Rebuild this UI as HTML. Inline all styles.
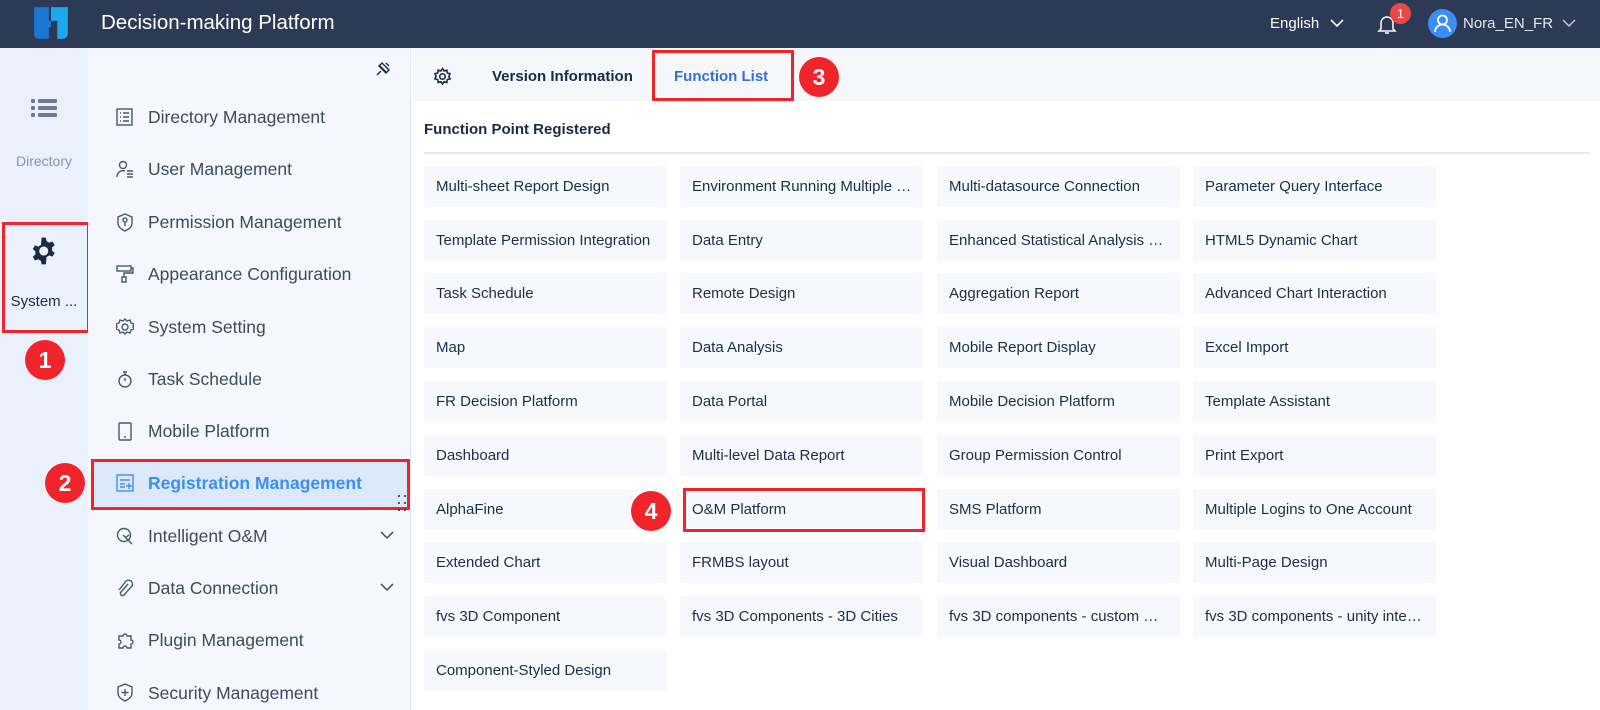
<!DOCTYPE html>
<html><head><meta charset="utf-8"><style>
*{margin:0;padding:0;box-sizing:border-box}
body{width:1600px;height:710px;overflow:hidden;background:#fff;font-family:"Liberation Sans",Arial,sans-serif;position:relative;color:#1f2d4a}
.abs{position:absolute}
#hdr{left:0;top:0;width:1600px;height:48px;background:#2c3a55}
#rail{left:0;top:48px;width:88px;height:662px;background:#eaf1fc}
#side{left:88px;top:48px;width:323px;height:662px;background:#f5f7fd;border-right:1px solid #e3e6ee}
.mi{position:absolute;left:148px;font-size:17.5px;color:#3e4a60;line-height:20px}
#tabs{left:412px;top:48px;width:1188px;height:53px;background:#f6f7fb}
.cell{position:absolute;width:243px;height:41px;background:#f6f8fc;font-size:15px;line-height:41px;padding-left:12px;color:#1f2d4a;white-space:nowrap;overflow:hidden}
.badge{position:absolute;width:40px;height:40px;border-radius:50%;background:#f0242b;color:#fff;font-weight:bold;font-size:23px;text-align:center;line-height:40px}
.red{position:absolute;border:3px solid #f0242b}
</style></head><body>
<div id="hdr" class="abs">
 <svg class="abs" style="left:32px;top:4px" width="38" height="38" viewBox="0 0 36 36"><path d="M2 3h14v30H6a4 4 0 0 1-4-4z" fill="#1a77d2"/><path d="M18 3h16v25a5 5 0 0 1-5 5h-5V16h-6z" fill="#1ea6ee"/><rect x="10" y="16" width="8" height="6" fill="#1a77d2"/></svg>
 <div class="abs" style="left:101px;top:11px;color:#fff;font-size:20.5px">Decision-making Platform</div>
 <div class="abs" style="left:1270px;top:15px;color:#fff;font-size:15px">English</div>
 <svg class="abs" style="left:1330px;top:18px" width="14" height="10"><path d="M1 2l6 6 6-6" stroke="#fff" stroke-width="1.6" fill="none"/></svg>
 <svg class="abs" style="left:1377px;top:13px" width="20" height="22"><path d="M4 16V10a6 6 0 0 1 12 0v6l2 2H2z M8 20h4" stroke="#fff" stroke-width="1.5" fill="none"/></svg>
 <div class="abs" style="left:1390px;top:3px;width:21px;height:21px;border-radius:50%;background:#e94848;color:#fff;font-size:13px;text-align:center;line-height:21px">1</div>
 <div class="abs" style="left:1428px;top:9px;width:29px;height:29px;border-radius:50%;background:#3a8ef6"></div>
 <svg class="abs" style="left:1428px;top:9px" width="29" height="29"><circle cx="14.5" cy="11" r="4.5" stroke="#fff" stroke-width="1.8" fill="none"/><path d="M7 23a7.5 7.5 0 0 1 15 0" stroke="#fff" stroke-width="1.8" fill="none"/></svg>
 <div class="abs" style="left:1463px;top:15px;color:#e4e8ef;font-size:15px">Nora_EN_FR</div>
 <svg class="abs" style="left:1562px;top:18px" width="14" height="10"><path d="M1 2l6 6 6-6" stroke="#c8ced9" stroke-width="1.4" fill="none"/></svg>
</div>
<div id="rail" class="abs"></div>
<svg class="abs" style="left:31px;top:98px" width="26" height="20"><g fill="#6b7a92"><rect x="0" y="1" width="4" height="4" rx="1"/><rect x="7" y="1" width="19" height="4" rx="1"/><rect x="0" y="8" width="4" height="4" rx="1"/><rect x="7" y="8" width="19" height="4" rx="1"/><rect x="0" y="15" width="4" height="4" rx="1"/><rect x="7" y="15" width="19" height="4" rx="1"/></g></svg>
<div class="abs" style="left:0;width:88px;top:153px;text-align:center;color:#8a94a6;font-size:14px">Directory</div>
<svg class="abs" style="left:28px;top:235px" width="32" height="32" viewBox="0 0 24 24"><path fill="#1b2a44" fill-rule="evenodd" d="M13.4 2l.5 2.6a7.6 7.6 0 0 1 2 1.2l2.5-.9 1.6 2.8-2 1.7a7.5 7.5 0 0 1 0 2.3l2 1.7-1.6 2.8-2.5-.9a7.6 7.6 0 0 1-2 1.2L13.4 22h-3.2l-.5-2.6a7.6 7.6 0 0 1-2-1.2l-2.5.9-1.6-2.8 2-1.7a7.5 7.5 0 0 1 0-2.3l-2-1.7 1.6-2.8 2.5.9a7.6 7.6 0 0 1 2-1.2L10.2 2zM11.8 8.6a3.4 3.4 0 1 0 0 6.8 3.4 3.4 0 0 0 0-6.8z"/></svg>
<div class="abs" style="left:0;width:88px;top:293px;text-align:center;color:#1b2a44;font-size:15px">System ...</div>
<div class="red" style="left:2px;top:222px;width:88px;height:111px"></div>
<div class="badge" style="left:25px;top:340px">1</div>
<div id="side" class="abs"></div>
<svg class="abs" style="left:374px;top:60px" width="18" height="18"><path d="M3 15l4-4M6 6l6 6M8 3l7 7-3 3-7-7zM12 3l3 3" stroke="#1b2a44" stroke-width="1.4" fill="none"/></svg>
<div class="abs" style="left:91px;top:460px;width:320px;height:49px;background:#dce9fb"></div>
<div class="red" style="left:91px;top:459px;width:319px;height:51px"></div>
<div class="badge" style="left:45px;top:463px">2</div>
<div class="mi" style="top:107px">Directory Management</div>
<div class="mi" style="top:159px">User Management</div>
<div class="mi" style="top:212px">Permission Management</div>
<div class="mi" style="top:264px">Appearance Configuration</div>
<div class="mi" style="top:317px">System Setting</div>
<div class="mi" style="top:369px">Task Schedule</div>
<div class="mi" style="top:421px">Mobile Platform</div>
<div class="mi" style="top:473px;color:#3c8ef0;font-weight:bold">Registration Management</div>
<div class="mi" style="top:526px">Intelligent O&amp;M</div>
<div class="mi" style="top:578px">Data Connection</div>
<div class="mi" style="top:630px">Plugin Management</div>
<div class="mi" style="top:683px">Security Management</div>
<svg class="abs" style="left:380px;top:530px" width="14" height="10"><path d="M1 2l6 6 6-6" stroke="#3e4a60" stroke-width="1.5" fill="none"/></svg>
<svg class="abs" style="left:380px;top:582px" width="14" height="10"><path d="M1 2l6 6 6-6" stroke="#3e4a60" stroke-width="1.5" fill="none"/></svg>
<svg class="abs" style="left:116px;top:108px" width="18" height="500" fill="none" stroke="#4a5670" stroke-width="1.4">
 <rect x="1" y="1" width="15" height="16"/><path d="M4 5h1M7 5h6M4 9h1M7 9h6M4 13h1M7 13h6"/>
 <g transform="translate(0,52)"><circle cx="7" cy="5" r="3.5"/><path d="M1 17a6 6 0 0 1 8-6M11 11h6M11 14h6M11 17h6"/></g>
 <g transform="translate(0,105)"><path d="M9 1l7 3v6c0 4-3 6-7 8-4-2-7-4-7-8V4z"/><circle cx="9" cy="7" r="2"/><path d="M9 9v4"/></g>
 <g transform="translate(0,157)"><rect x="1" y="1" width="14" height="5"/><path d="M15 3h2v5H8v4"/><rect x="6" y="12" width="4" height="5"/></g>
 <g transform="translate(0,210)"><circle cx="9" cy="9" r="3"/><path d="M9 1l2 2 3-1 1 3 3 1-1 3 1 2-3 1-1 3-3-1-2 2-2-2-3 1-1-3-3-1 1-2-1-3 3-1 1-3 3 1z"/></g>
 <g transform="translate(0,262)"><circle cx="9" cy="11" r="6"/><path d="M9 8v3M7 2h4M9 2v3"/></g>
 <g transform="translate(0,314)"><rect x="3" y="1" width="12" height="17" rx="1"/><path d="M8 15h2"/></g>
 <g transform="translate(0,366)" stroke="#3c8ef0"><rect x="1" y="1" width="16" height="16"/><path d="M4 6h10M4 10h5M4 13h5M13 9v6M10 12h6"/></g>
 <g transform="translate(0,419)"><circle cx="8" cy="8" r="6.5"/><path d="M7 8l9 9M10 10l3-2"/></g>
 <g transform="translate(0,471)"><path d="M12 5l-7 8a2 2 0 0 0 3 3l8-9a4 4 0 0 0-6-5L3 11"/></g>
</svg>
<svg class="abs" style="left:116px;top:631px" width="18" height="72" fill="none" stroke="#4a5670" stroke-width="1.4">
 <path d="M3 5h4a2 2 0 0 1 4 0h4v4a2 2 0 0 1 0 4v4H11a2 2 0 0 0-4 0H3v-4a2 2 0 0 0 0-4z"/>
 <g transform="translate(0,52)"><path d="M9 1l7 3v6c0 4-3 6-7 8-4-2-7-4-7-8V4z"/><path d="M9 6v7M5.5 9.5h7"/></g>
</svg>
<svg class="abs" style="left:397px;top:494px" width="10" height="18" fill="#1b2a44"><circle cx="2" cy="2" r="1"/><circle cx="8" cy="2" r="1"/><circle cx="2" cy="9" r="1"/><circle cx="8" cy="9" r="1"/><circle cx="2" cy="16" r="1"/><circle cx="8" cy="16" r="1"/></svg>
<div id="tabs" class="abs"></div>
<svg class="abs" style="left:433px;top:67px" width="19" height="19" viewBox="0 0 24 24" fill="none" stroke="#1b2a44" stroke-width="2"><circle cx="12" cy="12" r="3.5"/><path d="M12 2l2 3 3.5-1 .5 3.5 3.5 1-1.5 3.5 1.5 3-3.5 1-.5 3.5-3.5-1-2 3-2-3-3.5 1-.5-3.5-3.5-1 1.5-3.5-1.5-3 3.5-1 .5-3.5 3.5 1z"/></svg>
<div class="abs" style="left:492px;top:68px;font-size:15px;font-weight:bold;color:#1b2a44">Version Information</div>
<div class="abs" style="left:674px;top:68px;font-size:15px;font-weight:bold;color:#2f6fe0">Function List</div>
<div class="abs" style="left:655px;top:98px;width:133px;height:2px;background:#2f6fe0"></div>
<div class="red" style="left:652px;top:50px;width:142px;height:51px"></div>
<div class="badge" style="left:799px;top:57px">3</div>
<div class="abs" style="left:424px;top:121px;font-size:15px;font-weight:bold;color:#1b2a44">Function Point Registered</div>
<div class="abs" style="left:424px;top:152px;width:1166px;height:2px;background:#e6e8ee"></div>
<div class="cell" style="left:424px;top:166px">Multi-sheet Report Design</div>
<div class="cell" style="left:680px;top:166px">Environment Running Multiple …</div>
<div class="cell" style="left:937px;top:166px">Multi-datasource Connection</div>
<div class="cell" style="left:1193px;top:166px">Parameter Query Interface</div>
<div class="cell" style="left:424px;top:220px">Template Permission Integration</div>
<div class="cell" style="left:680px;top:220px">Data Entry</div>
<div class="cell" style="left:937px;top:220px">Enhanced Statistical Analysis …</div>
<div class="cell" style="left:1193px;top:220px">HTML5 Dynamic Chart</div>
<div class="cell" style="left:424px;top:273px">Task Schedule</div>
<div class="cell" style="left:680px;top:273px">Remote Design</div>
<div class="cell" style="left:937px;top:273px">Aggregation Report</div>
<div class="cell" style="left:1193px;top:273px">Advanced Chart Interaction</div>
<div class="cell" style="left:424px;top:327px">Map</div>
<div class="cell" style="left:680px;top:327px">Data Analysis</div>
<div class="cell" style="left:937px;top:327px">Mobile Report Display</div>
<div class="cell" style="left:1193px;top:327px">Excel Import</div>
<div class="cell" style="left:424px;top:381px">FR Decision Platform</div>
<div class="cell" style="left:680px;top:381px">Data Portal</div>
<div class="cell" style="left:937px;top:381px">Mobile Decision Platform</div>
<div class="cell" style="left:1193px;top:381px">Template Assistant</div>
<div class="cell" style="left:424px;top:435px">Dashboard</div>
<div class="cell" style="left:680px;top:435px">Multi-level Data Report</div>
<div class="cell" style="left:937px;top:435px">Group Permission Control</div>
<div class="cell" style="left:1193px;top:435px">Print Export</div>
<div class="cell" style="left:424px;top:489px">AlphaFine</div>
<div class="cell" style="left:680px;top:489px">O&amp;M Platform</div>
<div class="cell" style="left:937px;top:489px">SMS Platform</div>
<div class="cell" style="left:1193px;top:489px">Multiple Logins to One Account</div>
<div class="cell" style="left:424px;top:542px">Extended Chart</div>
<div class="cell" style="left:680px;top:542px">FRMBS layout</div>
<div class="cell" style="left:937px;top:542px">Visual Dashboard</div>
<div class="cell" style="left:1193px;top:542px">Multi-Page Design</div>
<div class="cell" style="left:424px;top:596px">fvs 3D Component</div>
<div class="cell" style="left:680px;top:596px">fvs 3D Components - 3D Cities</div>
<div class="cell" style="left:937px;top:596px">fvs 3D components - custom …</div>
<div class="cell" style="left:1193px;top:596px">fvs 3D components - unity inte…</div>
<div class="cell" style="left:424px;top:650px">Component-Styled Design</div>
<div class="red" style="left:683px;top:488px;width:242px;height:44px"></div>
<div class="badge" style="left:631px;top:491px">4</div>
</body></html>
